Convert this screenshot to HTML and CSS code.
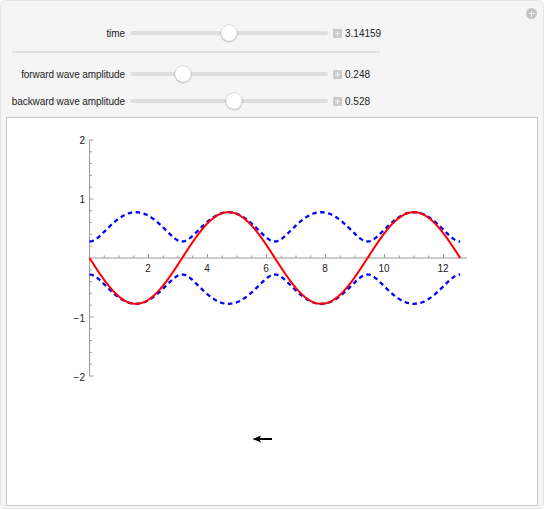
FILE: index.html
```html
<!DOCTYPE html>
<html>
<head>
<meta charset="utf-8">
<link rel="stylesheet" href="styles.css">
</head>
<body>
<div class="panel">
  <div class="corner-btn"></div>
  <div class="controls">
    <div class="row">
      <div class="label">time</div>
      <div class="track"><div class="thumb" style="left:91px"></div></div>
      <div class="plus"></div>
      <div class="value">3.14159</div>
    </div>
    <div class="sep"></div>
    <div class="row">
      <div class="label">forward wave amplitude</div>
      <div class="track"><div class="thumb" style="left:45px"></div></div>
      <div class="plus"></div>
      <div class="value">0.248</div>
    </div>
    <div class="row row-b">
      <div class="label">backward wave amplitude</div>
      <div class="track"><div class="thumb" style="left:96px"></div></div>
      <div class="plus"></div>
      <div class="value">0.528</div>
    </div>
  </div>
  <div class="plotbox">
    <svg class="plot" width="530" height="386" viewBox="7 118 530 386" xmlns="http://www.w3.org/2000/svg">
      <g id="axes" stroke="#9a9a9a" stroke-width="1" fill="none"></g>
      <g class="ticklabels" font-size="10" fill="#222">
        <text x="85" y="143.5" text-anchor="end">2</text>
        <text x="85" y="202.5" text-anchor="end">1</text>
        <text x="85" y="321.5" text-anchor="end">−1</text>
        <text x="85" y="380.5" text-anchor="end">−2</text>
        <text x="148" y="271.5" text-anchor="middle">2</text>
        <text x="207" y="271.5" text-anchor="middle">4</text>
        <text x="266" y="271.5" text-anchor="middle">6</text>
        <text x="325" y="271.5" text-anchor="middle">8</text>
        <text x="384" y="271.5" text-anchor="middle">10</text>
        <text x="443" y="271.5" text-anchor="middle">12</text>
      </g>
      <path id="envTop" fill="none" stroke="#0000ff" stroke-width="2.3" stroke-dasharray="4.5 3.5"></path>
      <path id="envBot" fill="none" stroke="#0000ff" stroke-width="2.3" stroke-dasharray="4.5 3.5"></path>
      <path id="wave" fill="none" stroke="#ff0000" stroke-width="2"></path>
      <g class="arrow">
        <line x1="259" y1="439" x2="272" y2="439" stroke="#000" stroke-width="2"></line>
        <polygon points="252.5,439 261,435.5 259.5,439 261,442.5" fill="#000"></polygon>
      </g>
    </svg>
  </div>
</div>
<script src="script.js"></script>
</body>
</html>
```
FILE: styles.css
```css
html, body {
  margin: 0;
  padding: 0;
  background: #ffffff;
}
body {
  font-family: "Liberation Sans", Arial, sans-serif;
  color: #222;
}
.panel {
  position: relative;
  box-sizing: border-box;
  width: 544px;
  height: 509px;
  background: #f5f5f5;
  border: 1px solid #e4e4e4;
  border-radius: 6px;
  padding: 23px 0 0 5px;
}
.corner-btn {
  position: absolute;
  right: 6px;
  top: 7px;
  width: 11px;
  height: 11px;
  border-radius: 50%;
  background: #c4c4c4;
}
.corner-btn::before,
.corner-btn::after {
  content: "";
  position: absolute;
  background: #f5f5f5;
}
.corner-btn::before {
  left: 2.5px;
  top: 4.75px;
  width: 6px;
  height: 1.5px;
}
.corner-btn::after {
  left: 4.75px;
  top: 2.5px;
  width: 1.5px;
  height: 6px;
}
.controls {
  display: flex;
  flex-direction: column;
}
.row {
  display: flex;
  align-items: center;
  height: 18px;
  font-size: 10px;
}
.label {
  width: 119px;
  text-align: right;
  padding-right: 5px;
  white-space: nowrap;
  letter-spacing: -0.08px;
}
.track {
  position: relative;
  width: 198px;
  height: 4px;
  border-radius: 2px;
  background: #dedede;
}
.thumb {
  position: absolute;
  top: -6px;
  width: 16px;
  height: 16px;
  border-radius: 50%;
  background: #ffffff;
  box-shadow: 0 0 0 0.5px rgba(0,0,0,0.18), 0 1px 2px rgba(0,0,0,0.22);
}
.plus {
  position: relative;
  width: 9px;
  height: 9px;
  margin-left: 5px;
  background: #cacaca;
  border-radius: 1px;
}
.plus::before,
.plus::after {
  content: "";
  position: absolute;
  background: #f2f2f2;
}
.plus::before {
  left: 2px;
  top: 4px;
  width: 5px;
  height: 1px;
}
.plus::after {
  left: 4px;
  top: 2px;
  width: 1px;
  height: 5px;
}
.value {
  margin-left: 3px;
  white-space: nowrap;
}
.sep {
  width: 368px;
  height: 2px;
  background: #e0e0e0;
  margin: 9px 0 12px 6px;
}
.row-b {
  margin-top: 9px;
}
.plotbox {
  box-sizing: border-box;
  width: 532px;
  height: 389px;
  margin-top: 7px;
  background: #ffffff;
  border: 1px solid #c6c6c6;
}
.plot {
  display: block;
  font-family: "Liberation Sans", Arial, sans-serif;
}
```
FILE: script.js
```js
(function () {
  var NS = "http://www.w3.org/2000/svg";
  var x0 = 89.5, y0 = 258, sx = 29.5, sy = 59;
  var a = 0.248, b = 0.528, t = Math.PI;
  var axes = document.getElementById("axes");
  function line(x1, y1, x2, y2) {
    var l = document.createElementNS(NS, "line");
    l.setAttribute("x1", x1); l.setAttribute("y1", y1);
    l.setAttribute("x2", x2); l.setAttribute("y2", y2);
    axes.appendChild(l);
  }
  // y axis
  line(x0, y0 - 2 * sy, x0, y0 + 2 * sy);
  for (var i = -10; i <= 10; i++) {
    var yy = y0 - i * 0.2 * sy;
    var len = (i % 5 === 0) ? 4 : 2.5;
    if (i !== 0) line(x0, yy, x0 + len, yy);
  }
  // x axis
  line(x0 - 0.5, y0, 467, y0);
  for (var j = 1; j <= 25; j++) {
    var xx = x0 + j * 0.5 * sx;
    if (xx > 466) break;
    var l2 = (j % 4 === 0) ? 4 : 2.5;
    line(xx, y0, xx, y0 - l2);
  }
  var N = 400, X = 4 * Math.PI;
  var dw = "", dt = "", db = "";
  for (var k = 0; k <= N; k++) {
    var x = X * k / N;
    var w = a * Math.sin(x - t) + b * Math.sin(x + t);
    var e = Math.sqrt(a * a + b * b - 2 * a * b * Math.cos(2 * x));
    var px = (x0 + x * sx).toFixed(2);
    var cmd = k === 0 ? "M" : "L";
    dw += cmd + px + "," + (y0 - w * sy).toFixed(2);
    dt += cmd + px + "," + (y0 - e * sy).toFixed(2);
    db += cmd + px + "," + (y0 + e * sy).toFixed(2);
  }
  document.getElementById("wave").setAttribute("d", dw);
  document.getElementById("envTop").setAttribute("d", dt);
  document.getElementById("envBot").setAttribute("d", db);
})();
```
